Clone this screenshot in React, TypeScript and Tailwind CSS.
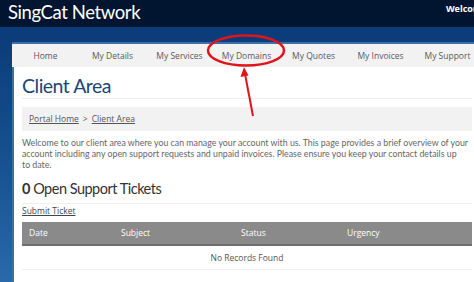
export default function App() {
    const navItems = ["Home", "My Details", "My Services", "My Domains", "My Quotes", "My Invoices", "My Support"];
    const columns = [
        { label: "Date", w: "w-[92px]" },
        { label: "Subject", w: "w-[120px]" },
        { label: "Status", w: "w-[106px]" },
        { label: "Urgency", w: "flex-1" },
    ];

    return (
        <div className="relative w-[474px] h-[282px] overflow-hidden bg-[#0b3b78] font-['Open_Sans',sans-serif]">
            {/* Header */}
            <div className="h-[27px] bg-[#011530] flex items-start justify-between pl-[8px]">
                <span className="text-white text-[18.5px] leading-[22px] pt-[1px] tracking-[-0.4px] font-['Lato',sans-serif]">SingCat Network</span>
                <span className="text-white text-[9px] leading-[12px] font-bold mt-[3px] whitespace-nowrap mr-[-13px]">Welcome</span>
            </div>

            {/* Body */}
            <div className="h-[255px] bg-gradient-to-b from-[#0b3b78] via-[#174f8f] to-[#2a69aa] pt-[15px] pl-[12px]">
                <div className="h-full bg-white border-l-2 border-t-2 border-[#3f6fa8]">
                    {/* Nav */}
                    <div className="flex h-[23px] bg-[#f2f2f2] items-center -ml-[2px]">
                        {navItems.map((item) => (
                            <div key={item} className="w-[67px] shrink-0 text-center text-[8.5px] leading-[12px] text-[#5a5a5a] whitespace-nowrap">
                                {item}
                            </div>
                        ))}
                    </div>

                    <div className="pl-[8px] pr-[2px]">
                        <h1 className="text-[19.5px] leading-[24px] tracking-[-0.5px] text-[#1d4576] mt-[7px] border-b border-[#eeeeee] font-['Lato',sans-serif]">
                            Client Area
                        </h1>

                        <div className="mt-[8px] h-[24px] bg-[#f2f2f2] flex items-center pl-[7px] text-[8.5px] leading-[12px] text-[#555]">
                            <span className="underline">Portal Home</span>
                            <span className="mx-[4px]">&gt;</span>
                            <span className="underline">Client Area</span>
                        </div>

                        <p className="mt-[6px] text-[8.8px] leading-[11px] text-[#666] whitespace-nowrap font-['Lato',sans-serif]">
                            Welcome to our client area where you can manage your account with us. This page provides a brief overview of your
                            <br />
                            account including any open support requests and unpaid invoices. Please ensure you keep your contact details up
                            <br />
                            to date.
                        </p>

                        <div className="mt-[9px] text-[14.5px] leading-[20px] tracking-[-0.5px] text-[#333] border-b border-[#f0f0f0] pb-[4px] font-['Lato',sans-serif]">
                            <span className="font-bold">0</span> Open Support Tickets
                        </div>

                        <div className="mt-[1px] text-[8.5px] leading-[12px] text-[#444] underline">Submit Ticket</div>

                        <div className="mt-[5px] flex h-[24px] items-center bg-[#8a8a8a] border-b-2 border-[#6f6f6f] text-white text-[8.5px] leading-[12px]">
                            {columns.map((c) => (
                                <div key={c.label} className={`${c.w} pl-[7px]`}>
                                    {c.label}
                                </div>
                            ))}
                        </div>
                        <div className="h-[24px] flex items-center justify-center text-[8.5px] leading-[12px] text-[#555] border-b border-[#f0f0f0]">
                            No Records Found
                        </div>
                    </div>
                </div>
            </div>

            {/* Annotation */}
            <svg className="absolute left-0 top-0 pointer-events-none" width="474" height="282" viewBox="0 0 474 282">
                <ellipse cx="246" cy="50.5" rx="38" ry="15" fill="none" stroke="#e0141c" strokeWidth="2.5" />
                <line x1="253" y1="116" x2="245" y2="74" stroke="#e0141c" strokeWidth="2" />
                <polygon points="244,67 240.5,77 248.5,75.5" fill="#e0141c" />
            </svg>
        </div>
    );
}
